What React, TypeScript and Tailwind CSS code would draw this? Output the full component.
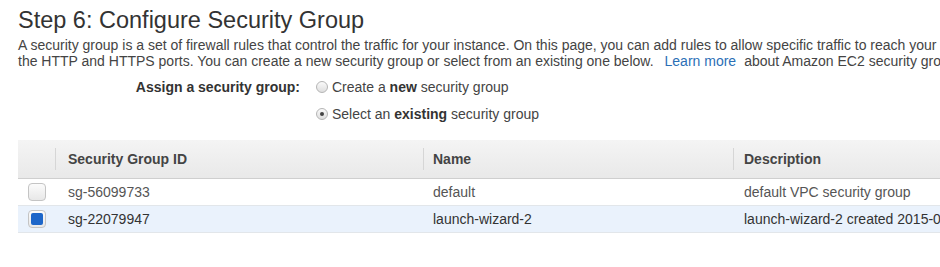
import React from "react";

type Group = {
  id: string;
  name: string;
  description: string;
  selected: boolean;
};

const groups: Group[] = [
  { id: "sg-56099733", name: "default", description: "default VPC security group", selected: false },
  { id: "sg-22079947", name: "launch-wizard-2", description: "launch-wizard-2 created 2015-06-17T10:21:44.382+05:30", selected: true },
];

const Radio: React.FC<{ checked: boolean }> = ({ checked }) => (
  <span className="inline-flex h-[12px] w-[12px] shrink-0 items-center justify-center rounded-full border border-[#b5b5b5] bg-gradient-to-b from-[#fafafa] to-[#dedede]">
    {checked && <span className="h-[4px] w-[4px] rounded-full bg-[#444]" />}
  </span>
);

const Checkbox: React.FC<{ checked: boolean }> = ({ checked }) => (
  <span className="flex h-[18px] w-[18px] items-center justify-center rounded-[4px] border border-[#c4c4c4] bg-gradient-to-b from-[#fbfbfb] to-[#e8e8e8]">
    {checked && <span className="h-[12px] w-[12px] rounded-[2px] bg-[#1d66c9]" />}
  </span>
);

const App: React.FC = () => {
  return (
    <div className="h-[267px] w-[940px] overflow-hidden bg-white font-['Liberation_Sans',Arial,sans-serif] text-[#444]">
      <div className="pl-[18px] pt-[6px]">
        <h1 className="mb-[3px] text-[23.5px] leading-[28px] text-[#333]">Step 6: Configure Security Group</h1>
        <p className="whitespace-nowrap text-[14px] leading-[16px]">
          A security group is a set of firewall rules that control the traffic for your instance. On this page, you can add rules to allow specific traffic to reach your instance.
        </p>
        <p className="whitespace-nowrap text-[14px] leading-[16px]">
          the HTTP and HTTPS ports. You can create a new security group or select from an existing one below.
          <span className="ml-[11px] mr-[8px] text-[#2b6fb6]">Learn more</span>about Amazon EC2 security groups.
        </p>
      </div>

      <div className="mt-[10px] flex text-[14px] leading-[16px]">
        <div className="w-[300px] shrink-0 text-right font-bold text-[#333]">Assign a security group:</div>
        <div className="ml-[16px] flex flex-col gap-[11px]">
          <label className="flex items-center gap-[4px]">
            <Radio checked={false} />
            <span>
              Create a <b className="text-[#333]">new</b> security group
            </span>
          </label>
          <label className="flex items-center gap-[4px]">
            <Radio checked={true} />
            <span>
              Select an <b className="text-[#333]">existing</b> security group
            </span>
          </label>
        </div>
      </div>

      <div className="ml-[18px] mt-[18px] w-[1000px] text-[14px]">
        <div className="flex h-[39px] items-center border-b border-[#cfcfcf] bg-gradient-to-b from-[#f4f4f4] to-[#e9e9e9] font-bold text-[#444]">
          <div className="flex h-full w-[38px] shrink-0 items-center justify-end">
            <span className="h-[22px] w-px bg-[#d6d6d6]" />
          </div>
          <div className="w-[367px] shrink-0 pl-[12px]">Security Group ID</div>
          <div className="flex h-full shrink-0 items-center">
            <span className="h-[22px] w-px bg-[#d6d6d6]" />
          </div>
          <div className="w-[309px] shrink-0 pl-[9px]">Name</div>
          <div className="flex h-full shrink-0 items-center">
            <span className="h-[22px] w-px bg-[#d6d6d6]" />
          </div>
          <div className="shrink-0 pl-[10px]">Description</div>
        </div>
        {groups.map((g) => (
          <div
            key={g.id}
            className={`flex h-[27px] items-center border-b border-[#e2e6ea] ${g.selected ? "bg-[#eaf2fc] text-[#333]" : "bg-white text-[#555]"}`}
          >
            <div className="flex w-[38px] shrink-0 justify-end pr-[10px]">
              <Checkbox checked={g.selected} />
            </div>
            <div className="w-[368px] shrink-0 whitespace-nowrap pl-[12px]">{g.id}</div>
            <div className="w-[310px] shrink-0 whitespace-nowrap pl-[9px]">{g.name}</div>
            <div className="shrink-0 whitespace-nowrap pl-[10px]">{g.description}</div>
          </div>
        ))}
      </div>
    </div>
  );
};

export default App;
